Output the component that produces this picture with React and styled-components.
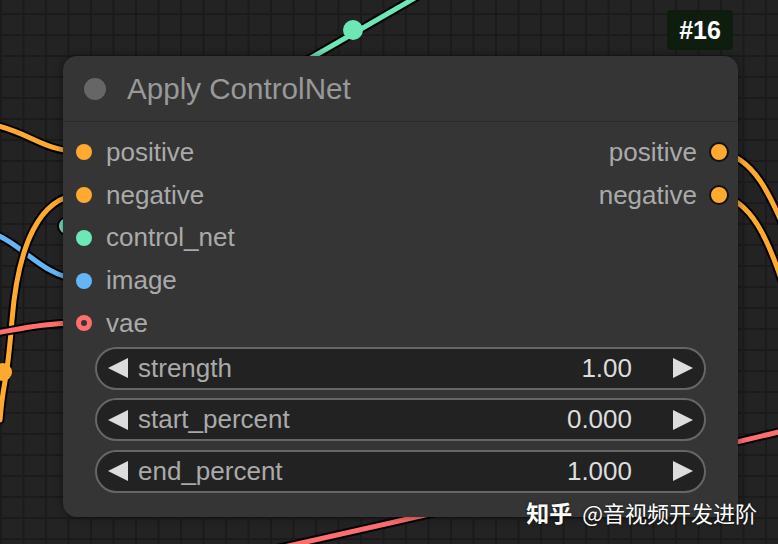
import styled, { createGlobalStyle } from 'styled-components'

const GlobalStyle = createGlobalStyle`
    html, body {
        margin: 0;
        padding: 0;
        background: #222;
    }
    body {
        font-family: "Liberation Sans", Arial, sans-serif;
    }
`

const Canvas = styled.div`
    position: relative;
    width: 778px;
    height: 544px;
    overflow: hidden;
    background-color: #232323;
    background-image:
        linear-gradient(#1b1b1b 2px, transparent 2px),
        linear-gradient(90deg, #1b1b1b 2px, transparent 2px);
    background-size: 22.5px 21px;
    background-position: 0 13px;
`

const Wires = styled.svg`
    position: absolute;
    left: 0;
    top: 0;
`

const Badge = styled.div`
    position: absolute;
    left: 667px;
    top: 10px;
    width: 66px;
    height: 40px;
    border-radius: 4px;
    background: #0f1d0f;
    color: #fff;
    font-weight: bold;
    font-size: 25px;
    display: flex;
    align-items: center;
    justify-content: center;
`

const Node = styled.div`
    position: absolute;
    left: 63px;
    top: 56px;
    width: 675px;
    background: #353535;
    border-radius: 14px;
    box-shadow: 0 0 8px rgba(0, 0, 0, 0.45);
    display: flex;
    flex-direction: column;
    padding-bottom: 24px;
`

const TitleBar = styled.div`
    height: 65px;
    display: flex;
    align-items: center;
    gap: 21px;
    padding-left: 21px;
    border-bottom: 1px solid #292929;
    color: #999;
    font-size: 29.6px;
`

const TitleDot = styled.span`
    width: 22px;
    height: 22px;
    border-radius: 50%;
    background: #666;
`

const Slots = styled.div`
    display: flex;
    flex-direction: column;
    padding-top: 9px;
`

const SlotRow = styled.div`
    height: 42.75px;
    display: flex;
    align-items: center;
    justify-content: space-between;
    font-size: 26px;
    color: #aaa;
`

const Slot = styled.div`
    display: flex;
    align-items: center;
    gap: ${p => (p.$out ? '12px' : '14px')};
    padding: ${p => (p.$out ? '0 9px 0 0' : '0 0 0 13px')};
`

const Dot = styled.span`
    box-sizing: border-box;
    width: ${p => (p.$out ? '20px' : '16px')};
    height: ${p => (p.$out ? '20px' : '16px')};
    border-radius: 50%;
    background: ${p => p.$color};
    border: ${p => (p.$out ? '2px solid #111' : 'none')};
    display: flex;
    align-items: center;
    justify-content: center;

    &::after {
        content: '';
        display: ${p => (p.$hollow ? 'block' : 'none')};
        width: 6px;
        height: 6px;
        border-radius: 50%;
        background: #353535;
    }
`

const Widgets = styled.div`
    display: flex;
    flex-direction: column;
    gap: 8.5px;
    padding: 2px 32px 0;
`

const Widget = styled.div`
    box-sizing: border-box;
    height: 43px;
    border: 2px solid #666;
    border-radius: 22px;
    background: #222;
    display: flex;
    align-items: center;
    padding: 0 11px 0 11px;
    font-size: 26px;
`

const Arrow = styled.svg`
    flex: none;
    fill: #ddd;
`

const WidgetLabel = styled.span`
    color: #aaa;
    margin-left: 10px;
    flex: 1;
`

const WidgetValue = styled.span`
    color: #ddd;
    margin-right: 41px;
`

const Watermark = styled.div`
    position: absolute;
    right: 21px;
    top: 495px;
    color: #fff;
    font-family: "Noto Sans CJK SC", "Liberation Sans", sans-serif;
    font-size: 23px;
    text-shadow: 0 0 3px rgba(0, 0, 0, 0.6);
    display: flex;
    align-items: center;
    gap: 10px;
    b {
        font-weight: bold;
    }
    span {
        font-size: 22px;
    }
`

const inputs = [
    { name: 'positive', color: '#ffa931' },
    { name: 'negative', color: '#ffa931' },
    { name: 'control_net', color: '#6ee7b7' },
    { name: 'image', color: '#64b5f6' },
    { name: 'vae', color: '#ff6e6e', hollow: true },
]

const outputs = ['positive', 'negative']

const widgets = [
    { name: 'strength', value: '1.00' },
    { name: 'start_percent', value: '0.000' },
    { name: 'end_percent', value: '1.000' },
]

const Wire = ({ d, color }) => (
    <g fill="none" strokeLinecap="round">
        <path d={d} stroke="#000" strokeWidth="9" />
        <path d={d} stroke={color} strokeWidth="5" />
    </g>
)

const App = () => {
    return (
        <Canvas>
            <GlobalStyle />
            <Wires width="778" height="544">
                <Wire d="M 290 70 L 420 -5" color="#6ee7b7" />
                <circle cx="353" cy="30" r="10" fill="#6ee7b7" />
                <Wire d="M -10 124 C 30 132, 40 150, 80 152" color="#ffa931" />
                <Wire d="M -10 232 C 25 245, 40 275, 80 280" color="#64b5f6" />
                <Wire d="M 80 195 C 40 196, 18 245, 12 320 S 4 372, 0 420" color="#ffa931" />
                <circle cx="3" cy="372" r="9" fill="#ffa931" />
                <Wire d="M -10 334 C 25 328, 45 323, 80 323" color="#ff6e6e" />
                <circle cx="67" cy="226" r="9" fill="#6ee7b7" stroke="#000" strokeWidth="2" />
                <Wire d="M 719 152 C 752 156, 770 190, 795 255" color="#ffa931" />
                <Wire d="M 719 195 C 750 200, 768 235, 788 300" color="#ffa931" />
                <Wire d="M 270 550 C 450 510, 600 475, 795 428" color="#ff6e6e" />
            </Wires>
            <Badge>#16</Badge>
            <Node>
                <TitleBar>
                    <TitleDot />
                    Apply ControlNet
                </TitleBar>
                <Slots>
                    {inputs.map((input, i) => (
                        <SlotRow key={input.name}>
                            <Slot>
                                <Dot $color={input.color} $hollow={input.hollow} />
                                {input.name}
                            </Slot>
                            {outputs[i] && (
                                <Slot $out>
                                    {outputs[i]}
                                    <Dot $out $color="#ffa931" />
                                </Slot>
                            )}
                        </SlotRow>
                    ))}
                </Slots>
                <Widgets>
                    {widgets.map(w => (
                        <Widget key={w.name}>
                            <Arrow width="20" height="20" viewBox="0 0 20 20">
                                <polygon points="0,10 20,0 20,20" />
                            </Arrow>
                            <WidgetLabel>{w.name}</WidgetLabel>
                            <WidgetValue>{w.value}</WidgetValue>
                            <Arrow width="20" height="20" viewBox="0 0 20 20">
                                <polygon points="0,0 20,10 0,20" />
                            </Arrow>
                        </Widget>
                    ))}
                </Widgets>
            </Node>
            <Watermark>
                <b>知乎</b>
                <span>@音视频开发进阶</span>
            </Watermark>
        </Canvas>
    )
}

export default App
